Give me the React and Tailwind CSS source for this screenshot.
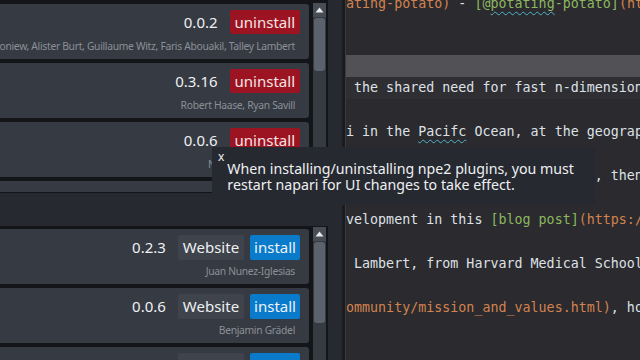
import React from "react";

const sans = { fontFamily: '"Noto Sans", "Open Sans", sans-serif' };
const mono = { fontFamily: '"DejaVu Sans Mono", "Liberation Mono", monospace' };

const topPlugins = [
  { version: "0.0.2", authors: "Nicholas Sofroniew, Alister Burt, Guillaume Witz, Faris Abouakil, Talley Lambert" },
  { version: "0.3.16", authors: "Robert Haase, Ryan Savill" },
  { version: "0.0.6", authors: "Nicholas Sofroniew" },
  { version: "0.1.0", authors: "" },
];

const available = [
  { version: "0.2.3", authors: "Juan Nunez-Iglesias" },
  { version: "0.0.6", authors: "Benjamin Grädel" },
  { version: "0.1.2", authors: "" },
];

function Card({ version, authors, installed }) {
  return (
    <div className="h-[55px] w-[309px] shrink-0 overflow-hidden rounded-r-[3px] bg-[#363a42] pr-[9px]">
      <div className="mt-[6px] flex h-[24px] items-center justify-end gap-[12px]">
        <span className="text-[15px] text-[#eef0f2]">{version}</span>
        <div className="flex gap-[6px]">
          {installed ? (
            <button className="h-[24px] rounded-[2px] bg-[#9c1422] px-[5px] text-[15px] leading-[24px] text-[#f4e4e6]">
              uninstall
            </button>
          ) : (
            <>
              <button className="h-[25px] rounded-[2px] bg-[#3f444c] px-[5px] text-[15px] leading-[25px] text-[#eef0f2]">
                Website
              </button>
              <button className="h-[25px] rounded-[2px] bg-[#0a7acb] px-[4px] text-[15px] leading-[25px] text-[#eef3f8]">
                install
              </button>
            </>
          )}
        </div>
      </div>
      <div className="mt-[6px] flex justify-end pr-[5px]">
        <span className="shrink-0 whitespace-nowrap text-[10.3px] leading-[12px] tracking-[-0.3px] text-[#8a9097]">
          {authors}
        </span>
      </div>
    </div>
  );
}

function ScrollBar({ thumb }) {
  return (
    <div className="flex w-[13px] flex-col bg-[#363a41]">
      <div className="flex h-[14px] items-center justify-center bg-[#484d55]">
        <svg width="9" height="6" viewBox="0 0 9 6">
          <path d="M4.5 0.5 L8.5 5.5 L0.5 5.5 Z" fill="#e8eaec" />
        </svg>
      </div>
      <div className={`mx-[1px] mt-[1px] rounded-[3px] bg-[#5b626b] ${thumb}`} />
    </div>
  );
}

function Line({ children, className = "" }) {
  return (
    <div className={`h-[22px] shrink-0 whitespace-pre leading-[22px] ${className}`}>{children}</div>
  );
}

const Or = ({ children }) => <span className="text-[#d2834f]">{children}</span>;
const Gr = ({ children }) => <span className="text-[#8bb860]">{children}</span>;
const Sq = ({ children }) => (
  <span className="underline decoration-wavy decoration-[#4fb3c8] decoration-1 underline-offset-[3px]">{children}</span>
);

export default function App() {
  return (
    <div className="relative flex h-[360px] w-[640px] overflow-hidden bg-[#262930]" style={sans}>
      <div className="flex h-[360px] w-[342px] shrink-0 flex-col bg-[#262930]">
        <div className="flex h-[193px] w-[328px] shrink-0 overflow-hidden border-b border-[#141518] bg-[#141518]">
          <div className="flex w-[309px] flex-col gap-[4px] overflow-hidden pt-[4px]">
            {topPlugins.map((p, i) => (
              <Card key={i} {...p} installed />
            ))}
          </div>
          <div className="ml-[4px] mt-[3px] flex">
            <ScrollBar thumb="h-[53px]" />
          </div>
        </div>
        <div className="h-[33px] shrink-0" />
        <div className="flex min-h-0 w-[328px] flex-1 overflow-hidden bg-[#141518]">
          <div className="flex w-[309px] flex-col gap-[4px] overflow-hidden pt-[3px]">
            {available.map((p, i) => (
              <Card key={i} {...p} />
            ))}
          </div>
          <div className="ml-[4px] mt-[1px] flex">
            <ScrollBar thumb="h-[81px]" />
          </div>
        </div>
      </div>

      <div className="w-[3px] shrink-0 bg-[#1b1b1d]" />

      <div className="relative flex flex-1 flex-col overflow-hidden border-l border-[#3b3a3e] bg-[#2b2a2e] text-[13.33px] text-[#dde1e6]" style={mono}>
        <Line className="-mt-[7px]">
          <Or>ating-potato)</Or> - <Gr>[@<Sq>potating</Sq>-potato]</Gr><Or>(https://github.com/potating-potato)</Or>
        </Line>
        <div className="h-[40px] shrink-0" />
        <Line className="bg-[#525155]"> </Line>
        <Line className="bg-[#2f2e32]"> the shared need for fast n-dimensional image viewing</Line>
        <Line> </Line>
        <Line>i in the <Sq>Pacifc</Sq> Ocean, at the geographical center</Line>
        <Line> </Line>
        <Line>nternational date line, in 2018, then the</Line>
        <Line> </Line>
        <Line>velopment in this <Gr>[blog post]</Gr><Or>(https://sofroniewn.github.io)</Or></Line>
        <Line> </Line>
        <Line> Lambert, from Harvard Medical School</Line>
        <Line> </Line>
        <Line><Or>ommunity/mission_and_values.html)</Or>, how we work</Line>
        <Line> </Line>
        <Line> </Line>
      </div>

      <div className="absolute left-[212px] top-[147px] flex h-[58px] w-[383px] bg-[#262930] text-[#eef0f2]">
        <span className="ml-[6px] mt-[4px] text-[12px] leading-[12px]">x</span>
        <div className="ml-[3px] mt-[14px] text-[14.2px] leading-[16px]">
          When installing/uninstalling npe2 plugins, you must
          <br />
          restart napari for UI changes to take effect.
        </div>
      </div>
    </div>
  );
}
